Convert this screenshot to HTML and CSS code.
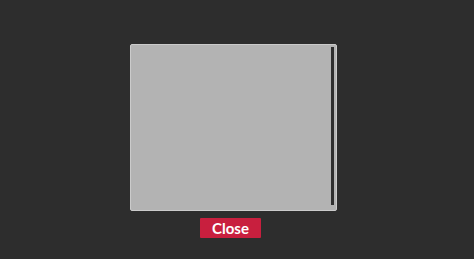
FILE: index.html
```html
<!DOCTYPE html>
<html>
<head>
<meta charset="utf-8">
<link rel="stylesheet" href="styles.css">
</head>
<body>
<div class="dialog">
  <div class="panel">
    <div class="scrollbar"></div>
  </div>
  <button class="close-btn">Close</button>
</div>
</body>
</html>
```
FILE: styles.css
```css
html, body {
  margin: 0;
  padding: 0;
  width: 474px;
  height: 259px;
  overflow: hidden;
}
body {
  background: #2d2d2d;
  font-family: "Lato", "Open Sans", sans-serif;
}
.dialog {
  display: flex;
  flex-direction: column;
  align-items: flex-start;
  padding: 44px 0 0 130px;
}
.panel {
  box-sizing: border-box;
  width: 207px;
  height: 167px;
  background: #b3b3b3;
  border: 1px solid #cbcbcb;
  border-radius: 2px;
  display: flex;
  justify-content: flex-end;
  padding: 2px 1px 5px 0;
}
.scrollbar {
  width: 3px;
  background: #2f2f2f;
  margin-right: 1px;
}
.close-btn {
  margin: 7px 0 0 70px;
  width: 61px;
  height: 20px;
  padding: 0;
  border: none;
  border-radius: 1px;
  background: #c81f3e;
  color: #ffffff;
  font-family: "Lato", "Open Sans", sans-serif;
  font-weight: 700;
  font-size: 15px;
  line-height: 20px;
  text-align: center;
}
```
